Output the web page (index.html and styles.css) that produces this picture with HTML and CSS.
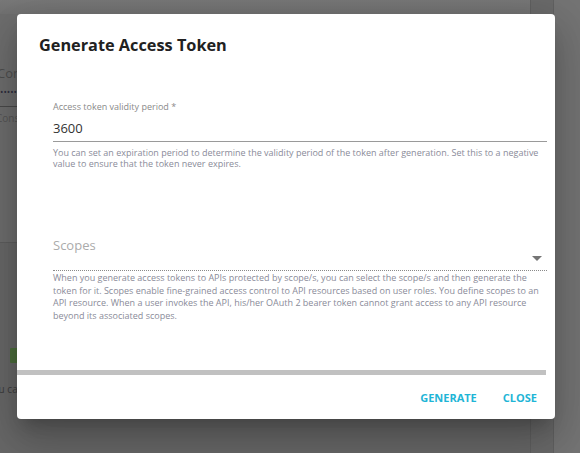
FILE: index.html
```html
<!DOCTYPE html>
<html>
<head>
<meta charset="utf-8">
<link rel="stylesheet" href="styles.css">
</head>
<body>
<div class="page">
  <div class="main">
    <div class="top-strip"></div>
    <div class="bg-card">
      <div class="bg-label">Consumer Secret</div>
      <div class="bg-dots">•••••••••</div>
      <div class="bg-help">Consumer secret</div>
    </div>
    <div class="bg-section">
      <div class="bg-check"></div>
      <div class="bg-text">You can use</div>
    </div>
  </div>
  <div class="narrow"></div>
  <div class="side"></div>
</div>

<div class="dialog">
  <h2 class="title">Generate Access Token</h2>
  <div class="content">
    <div class="field">
      <label class="label">Access token validity period *</label>
      <div class="input">3600</div>
      <p class="helper">You can set an expiration period to determine the validity period of the token after generation. Set this to a negative value to ensure that the token never expires.</p>
    </div>
    <div class="field scopes">
      <div class="select">
        <span class="placeholder">Scopes</span>
        <svg class="arrow" width="10" height="5" viewBox="0 0 10 5"><path d="M0 0 L10 0 L5 5 Z" fill="#757575"/></svg>
      </div>
      <p class="helper">When you generate access tokens to APIs protected by scope/s, you can select the scope/s and then generate the token for it. Scopes enable fine-grained access control to API resources based on user roles. You define scopes to an API resource. When a user invokes the API, his/her OAuth 2 bearer token cannot grant access to any API resource beyond its associated scopes.</p>
    </div>
  </div>
  <div class="scrollbar"></div>
  <div class="actions">
    <button class="btn">GENERATE</button>
    <button class="btn">CLOSE</button>
  </div>
</div>
</body>
</html>
```

FILE: styles.css
```css
html, body {
  margin: 0;
  padding: 0;
  height: 100%;
  overflow: hidden;
}
body {
  background: #6c6c6c;
  font-family: "Open Sans", "Liberation Sans", sans-serif;
}
.page {
  display: flex;
  height: 453px;
}
.main {
  width: 530px;
  background: #6b6b6b;
  display: flex;
  flex-direction: column;
}
.top-strip {
  height: 14px;
  background: linear-gradient(#797979, #727272);
}
.bg-card {
  padding-top: 50px;
  height: 178px;
  border-bottom: 1px solid #5e5e5e;
  background: #6e6e6e;
}
.bg-label {
  font-size: 13px;
  color: #4e4e4e;
  margin-left: -3px;
  line-height: 18px;
}
.bg-dots {
  font-size: 9px;
  color: #2e2e3e;
  line-height: 12px;
  margin-top: 4px;
  padding-bottom: 8px;
  border-bottom: 1px solid #4a4a4a;
  width: 200px;
}
.bg-help {
  font-size: 10px;
  color: #555;
  margin-left: -4px;
  line-height: 14px;
  margin-top: 4px;
}
.bg-section {
  padding-top: 105px;
  padding-left: 10px;
  background: #686868;
  flex: 1;
}
.bg-check {
  width: 14px;
  height: 15px;
  background: #4d6e3c;
  border-radius: 1px;
}
.bg-text {
  font-size: 10px;
  color: #3d3d3d;
  margin-left: -23px;
  margin-top: 19px;
}
.narrow {
  width: 22px;
  background: #6a6a6a;
  border-left: 1px solid #606060;
  border-right: 1px solid #616161;
}
.side {
  flex: 1;
  background: #747474;
}

.dialog {
  position: absolute;
  left: 17px;
  top: 14px;
  width: 538px;
  height: 405px;
  background: #fff;
  border-radius: 4px;
  box-shadow: 0 11px 15px -7px rgba(0,0,0,0.2), 0 24px 38px 3px rgba(0,0,0,0.14), 0 9px 46px 8px rgba(0,0,0,0.12);
  display: flex;
  flex-direction: column;
}
.title {
  margin: 0;
  padding: 20px 22px 0 22px;
  font-size: 16.3px;
  font-weight: 700;
  color: #212121;
  line-height: 22px;
  height: 66px;
}
.content {
  padding: 0 8px 0 36px;
  flex: 1;
}
.field {
  display: flex;
  flex-direction: column;
}
.label {
  font-size: 9px;
  color: #8a8a8a;
  line-height: 14px;
}
.input {
  font-size: 13px;
  color: #333;
  line-height: 18px;
  margin-top: 5px;
  padding-bottom: 4px;
  border-bottom: 1px solid #9a9a9a;
}
.helper {
  margin: 6px 0 0 0;
  font-size: 9px;
  line-height: 10.5px;
  color: #8a8b99;
}
.scopes {
  margin-top: 67px;
}
.select {
  display: flex;
  justify-content: space-between;
  align-items: flex-end;
  padding-bottom: 6px;
  border-bottom: 1px dotted #8a8a8a;
}
.placeholder {
  font-size: 13px;
  color: #ababab;
  line-height: 18px;
  margin-bottom: 10px;
}
.arrow {
  margin-right: 5px;
  margin-bottom: 3px;
}
.scopes .helper {
  line-height: 12.5px;
  font-size: 9px;
  margin-top: 1px;
}
.scrollbar {
  height: 5px;
  width: 529px;
  background: #c1c1c1;
}
.actions {
  display: flex;
  justify-content: flex-end;
  gap: 4px;
  padding: 10px 10px 0 0;
  height: 34px;
}
.btn {
  border: none;
  background: transparent;
  font-family: inherit;
  font-weight: 700;
  font-size: 11px;
  color: #1fb5d6;
  padding: 0 8px 0 8px;
  height: 24px;
  margin-left: 6px;
}
```
